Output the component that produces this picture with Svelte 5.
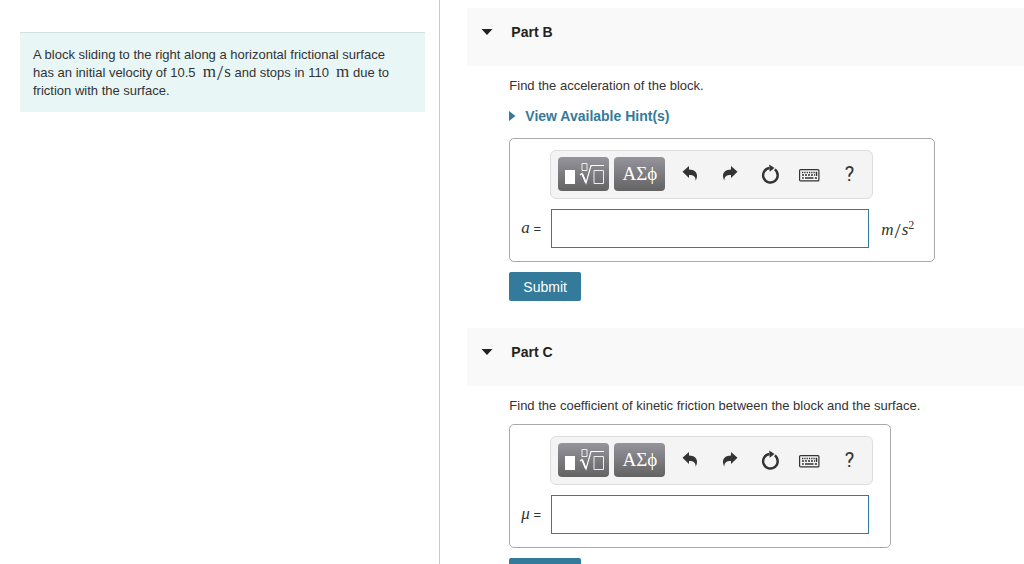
<script>
  const parts = [
    { id: 'B', prompt: 'Find the acceleration of the block.', hints: true, symbol: 'a', unit: true },
    { id: 'C', prompt: 'Find the coefficient of kinetic friction between the block and the surface.', hints: false, symbol: 'μ', unit: false }
  ];
  let open = $state({ B: true, C: true });
  let answers = $state({ B: '', C: '' });
</script>

<div class="page">
  <aside>
    <p class="problem">
      A block sliding to the right along a horizontal frictional surface has an initial velocity of
      10.5&nbsp; <span class="math">m<span class="slash">/</span>s</span> and stops in 110&nbsp; <span class="math">m</span> due to
      friction with the surface.
    </p>
  </aside>

  <main>
    {#each parts as part (part.id)}
      <section>
        <h2>
          <button class="toggle" aria-expanded={open[part.id]} onclick={() => (open[part.id] = !open[part.id])}>
            <svg width="12" height="6" viewBox="0 0 12 6"><path d="M.5 0h11L6 6z" fill="#222" /></svg>
            <span>Part {part.id}</span>
          </button>
        </h2>
        {#if open[part.id]}
          <div class="body">
            <p class="prompt">{part.prompt}</p>
            {#if part.hints}
              <a class="hints" href="#hints">
                <svg width="7" height="10" viewBox="0 0 7 10"><path d="M0 0l6.5 5L0 10z" fill="#347a9a" /></svg>
                View Available Hint(s)
              </a>
            {/if}
            <div class="answer">
              <div class="toolbar" role="toolbar" aria-label="Math tools">
                <button class="palette" aria-label="Templates">
                  <svg width="51" height="34" viewBox="0 0 51 34" fill="none">
                    <path d="M7 13h10v14H7z" fill="#fff" />
                    <path d="M24 6.500h5v7h-5zM36 13.500h9.500v13H36z" stroke="#eee" />
                    <path d="M22 18l2-1.500 4 9.500L33 8.500h13" stroke="#fff" stroke-width="1.200" />
                    <path d="M24.300 17l3.500 8.500" stroke="#fff" stroke-width="1.800" />
                  </svg>
                </button>
                <button class="palette greek" aria-label="Symbols">ΑΣϕ</button>
                <button class="tool" aria-label="Undo">
                  <svg width="16" height="18" viewBox="0 0 16 18"><path d="M0.500 6.800L7 1v3.400c5.200.1 8 2.600 8 6.200 0 2-.5 3.600-1.400 5.200.3-4-1.700-5.900-6.600-5.900v3.100z" fill="#333" /></svg>
                </button>
                <button class="tool" aria-label="Redo">
                  <svg width="16" height="18" viewBox="0 0 16 18"><path d="M15.500 6.800L9 1v3.400C3.800 4.500 1 7 1 10.600c0 2 .5 3.600 1.400 5.200-.3-4 1.700-5.900 6.600-5.900V13z" fill="#333" /></svg>
                </button>
                <button class="tool" aria-label="Reset">
                  <svg width="18" height="20" viewBox="0 0 18 20" fill="none"><path d="M13.800 5.400A7.300 7.300 0 1 1 8.500 4" stroke="#333" stroke-width="2.400" /><path d="M8.200.5l5.300 3.400-4.800 3.900z" fill="#333" /></svg>
                </button>
                <button class="tool" aria-label="Keyboard">
                  <svg class="keys" width="21" height="13" viewBox="0 0 21 13" fill="none" stroke="#333">
                    <rect x=".6" y=".6" width="19.300" height="11.300" rx="1" stroke-width="1.200" />
                    <path d="M3 3.500h15" stroke-width="1.300" stroke-dasharray="1.300 1" />
                    <path d="M3 6h13" stroke-width="1.300" stroke-dasharray="2 1" />
                    <path d="M17.500 3v4M3 9h1.800M6 9h8.500M15.800 9h2.200" stroke-width="1.400" />
                  </svg>
                </button>
                <button class="tool help" aria-label="Help">?</button>
              </div>
              <label for="answer-{part.id}"><i>{part.symbol}</i> =</label>
              <input id="answer-{part.id}" type="text" autocomplete="off" bind:value={answers[part.id]} />
              {#if part.unit}
                <span class="math unit"><i>m</i><span class="slash">/</span><i>s</i><sup>2</sup></span>
              {/if}
            </div>
            <button class="submit">Submit</button>
          </div>
        {/if}
      </section>
    {/each}
  </main>
</div>

<style>
  :global(body) {
    margin: 0;
    background: #fff;
  }
  .page {
    display: grid;
    grid-template-columns: 43fr 57fr;
    height: 100vh;
    color: #333;
    font: 13px/18px "Liberation Sans", Arial, sans-serif;
  }
  p, h2 {
    margin: 0;
  }
  button {
    font-family: inherit;
    cursor: pointer;
  }
  svg {
    display: block;
    flex: none;
  }
  aside {
    border-right: 1px solid #c3cad3;
    padding: 32px 14px 0 20px;
  }
  .problem {
    padding: 13px 22px 12px 13px;
    border-top: 1px solid #d5dfdf;
    background: #e8f6f6;
  }
  .math {
    font-family: "Liberation Serif", "Times New Roman", serif;
    font-size: 17px;
    line-height: 16px;
  }
  .slash {
    padding: 0 1px;
    font-size: 22px;
    line-height: 12px;
    vertical-align: -3px;
  }
  main {
    overflow: auto;
    scrollbar-width: none;
    padding: 8px 0 0 27px;
  }
  section {
    margin-bottom: 27px;
  }
  h2 {
    height: 58px;
    background: #f9f9f9;
  }
  .toggle {
    display: flex;
    align-items: center;
    gap: 18px;
    width: 100%;
    padding: 15px 14px;
    border: 0;
    background: none;
    color: #222;
    font-size: 14px;
    font-weight: bold;
    line-height: 18px;
  }
  .body {
    padding: 11px 20px 0 42px;
  }
  .hints {
    display: flex;
    align-items: center;
    gap: 9px;
    margin: 12px 0 4px;
    color: #347a9a;
    font-size: 14px;
    font-weight: bold;
    text-decoration: none;
  }
  .hints + .answer {
    margin-top: 13px;
  }
  .answer {
    display: grid;
    grid-template-columns: 30px 318px auto;
    row-gap: 10px;
    align-items: center;
    width: fit-content;
    margin: 9px 0 10px;
    padding: 11px 18px 13px 11px;
    border: 1px solid #aaa;
    border-radius: 5px;
  }
  .toolbar {
    grid-column: 2 / 4;
    display: flex;
    align-items: center;
    box-sizing: border-box;
    width: 323px;
    height: 49px;
    padding: 0 3px 2px 7px;
    border: 1px solid #ddd;
    border-radius: 6px;
    background: #f4f4f4;
    margin: 0 -1px;
  }
  .palette {
    flex: none;
    width: 51px;
    height: 34px;
    padding: 0;
    margin-right: 5px;
    border: 0;
    border-radius: 4px;
    background: linear-gradient(#96949c, #636363);
    color: #fff;
  }
  .greek {
    font: 19px/32px "Liberation Serif", serif;
  }
  .tool {
    display: flex;
    align-items: center;
    justify-content: center;
    width: 40px;
    height: 34px;
    padding: 0;
    border: 0;
    background: none;
    color: #333;
  }
  .keys {
    margin-top: 4px;
  }
  .help {
    font-family: Roboto, sans-serif;
    font-size: 20px;
  }
  label {
    white-space: nowrap;
  }
  label i {
    font: italic 17px/18px "Liberation Serif", serif;
  }
  input {
    box-sizing: border-box;
    width: 100%;
    height: 39px;
    padding: 0 8px;
    border: 1px solid #347a9a;
    background: #fff;
    font: 16px "Liberation Serif", serif;
  }
  .unit {
    padding: 0 2px 0 12px;
    white-space: nowrap;
  }
  sup {
    font-size: 12px;
    line-height: 1;
    vertical-align: 6px;
  }
  .submit {
    display: block;
    height: 29px;
    padding: 0 14px;
    border: 0;
    border-radius: 2px;
    background: #347a9a;
    color: #fff;
    font-size: 14px;
  }
</style>
